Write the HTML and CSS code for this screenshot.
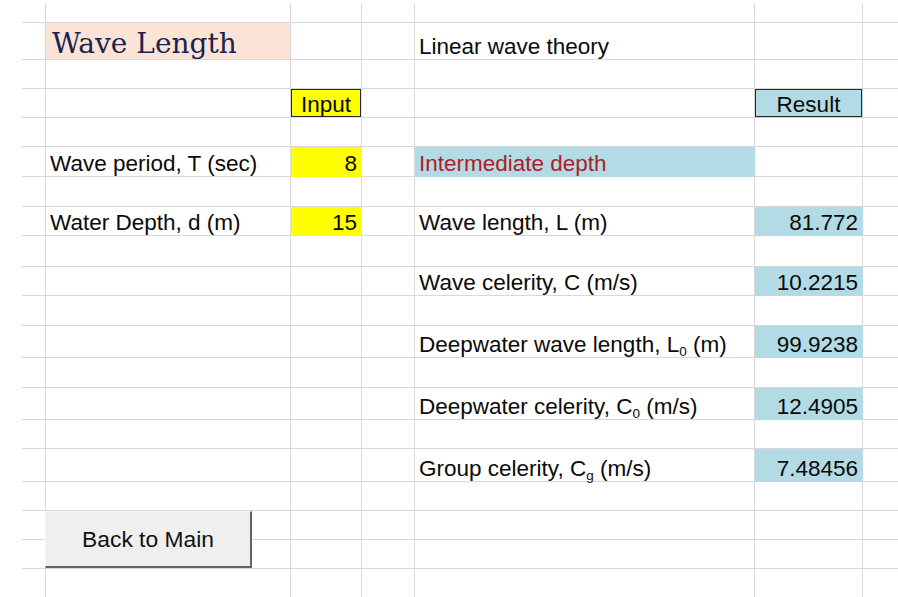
FILE: index.html
```html
<!DOCTYPE html>
<html lang="en">
<head>
  <meta charset="UTF-8">
  <title>Wave Length</title>
  <link rel="stylesheet" href="styles.css">
</head>
<body>
  <div class="sheet">
    <table class="grid">
      <colgroup>
        <col class="col-a"><col class="col-b"><col class="col-c"><col class="col-d"><col class="col-e"><col class="col-f"><col class="col-g">
      </colgroup>
      <tr class="h20"><td></td><td></td><td></td><td></td><td></td><td></td><td></td></tr>
      <tr class="h37"><td></td><td class="title">Wave Length</td><td></td><td></td><td>Linear wave theory</td><td></td><td></td></tr>
      <tr class="h29"><td></td><td></td><td></td><td></td><td></td><td></td><td></td></tr>
      <tr class="h29"><td></td><td></td><td class="input boxed">Input</td><td></td><td></td><td class="result boxed">Result</td><td></td></tr>
      <tr class="h29"><td></td><td></td><td></td><td></td><td></td><td></td><td></td></tr>
      <tr class="h30"><td></td><td>Wave period, T (sec)</td><td class="input num">8</td><td></td><td class="result depth">Intermediate depth</td><td></td><td></td></tr>
      <tr class="h30"><td></td><td></td><td></td><td></td><td></td><td></td><td></td></tr>
      <tr class="h29"><td></td><td>Water Depth, d (m)</td><td class="input num">15</td><td></td><td>Wave length, L (m)</td><td class="result num">81.772</td><td></td></tr>
      <tr class="h31"><td></td><td></td><td></td><td></td><td></td><td></td><td></td></tr>
      <tr class="h29"><td></td><td></td><td></td><td></td><td>Wave celerity, C (m/s)</td><td class="result num">10.2215</td><td></td></tr>
      <tr class="h30"><td></td><td></td><td></td><td></td><td></td><td></td><td></td></tr>
      <tr class="h32"><td></td><td></td><td></td><td></td><td>Deepwater wave length, L<sub>0</sub> (m)</td><td class="result num">99.9238</td><td></td></tr>
      <tr class="h30"><td></td><td></td><td></td><td></td><td></td><td></td><td></td></tr>
      <tr class="h32"><td></td><td></td><td></td><td></td><td>Deepwater celerity, C<sub>0</sub> (m/s)</td><td class="result num">12.4905</td><td></td></tr>
      <tr class="h29"><td></td><td></td><td></td><td></td><td></td><td></td><td></td></tr>
      <tr class="h33"><td></td><td></td><td></td><td></td><td>Group celerity, C<sub>g</sub> (m/s)</td><td class="result num">7.48456</td><td></td></tr>
      <tr class="h29"><td></td><td></td><td></td><td></td><td></td><td></td><td></td></tr>
      <tr class="h29"><td></td><td></td><td></td><td></td><td></td><td></td><td></td></tr>
      <tr class="h29"><td></td><td></td><td></td><td></td><td></td><td></td><td></td></tr>
      <tr class="h29"><td></td><td></td><td></td><td></td><td></td><td></td><td></td></tr>
    </table>
    <button class="back-btn">Back to Main</button>
  </div>
</body>
</html>
```

FILE: styles.css
```css
html, body {
  margin: 0;
  height: 100%;
  overflow: hidden;
  background: #ffffff;
}
body {
  font-family: "Liberation Sans", Arial, sans-serif;
  font-size: 22.5px;
  color: #0a0a0a;
}
.sheet {
  position: relative;
  margin: 3px 0 0 22px;
  width: 876px;
}
.grid {
  table-layout: fixed;
  width: 876px;
  border-collapse: separate;
  border-spacing: 0;
}
.col-a { width: 24px; }
.col-b { width: 245px; }
.col-c { width: 71px; }
.col-d { width: 53px; }
.col-e { width: 340px; }
.col-f { width: 108px; }
.col-g { width: 35px; }

.h20 { height: 20px; }
.h29 { height: 29px; }
.h30 { height: 30px; }
.h31 { height: 31px; }
.h32 { height: 32px; }
.h33 { height: 33px; }
.h37 { height: 37px; }

.grid td {
  box-sizing: border-box;
  padding: 0 4px 0 4px;
  border-right: 1px solid #d8d8d8;
  border-bottom: 1px solid #d8d8d8;
  vertical-align: bottom;
  white-space: nowrap;
  line-height: 1.12;
  overflow: visible;
}
.grid td:last-child {
  border-right: none;
}
.grid sub {
  font-size: 0.6em;
  vertical-align: -0.28em;
  line-height: 0;
}

/* cell fills */
.title {
  background: #fbe4d5;
  font-family: "DejaVu Serif", "Liberation Serif", serif;
  font-size: 28px;
  color: #17244f;
  padding-left: 6px !important;
}
.grid td.input {
  background: #ffff00;
  border-color: transparent;
}
.grid td.result {
  background: #b2dbe6;
  border-color: transparent;
}
.grid td.boxed {
  text-align: center;
  box-shadow: inset 0 0 0 1px #262626;
}
.num {
  text-align: right;
}
.depth {
  color: #b01c24;
}

.back-btn {
  position: absolute;
  left: 23px;
  top: 508px;
  width: 207px;
  height: 57px;
  margin: 0;
  padding: 0;
  background: #efefef;
  border-style: solid;
  border-width: 1px 2px 2px 1px;
  border-color: #f7f7f7 #646464 #646464 #f7f7f7;
  font-family: "Liberation Sans", Arial, sans-serif;
  font-size: 22.8px;
  color: #111;
  cursor: pointer;
}
```
